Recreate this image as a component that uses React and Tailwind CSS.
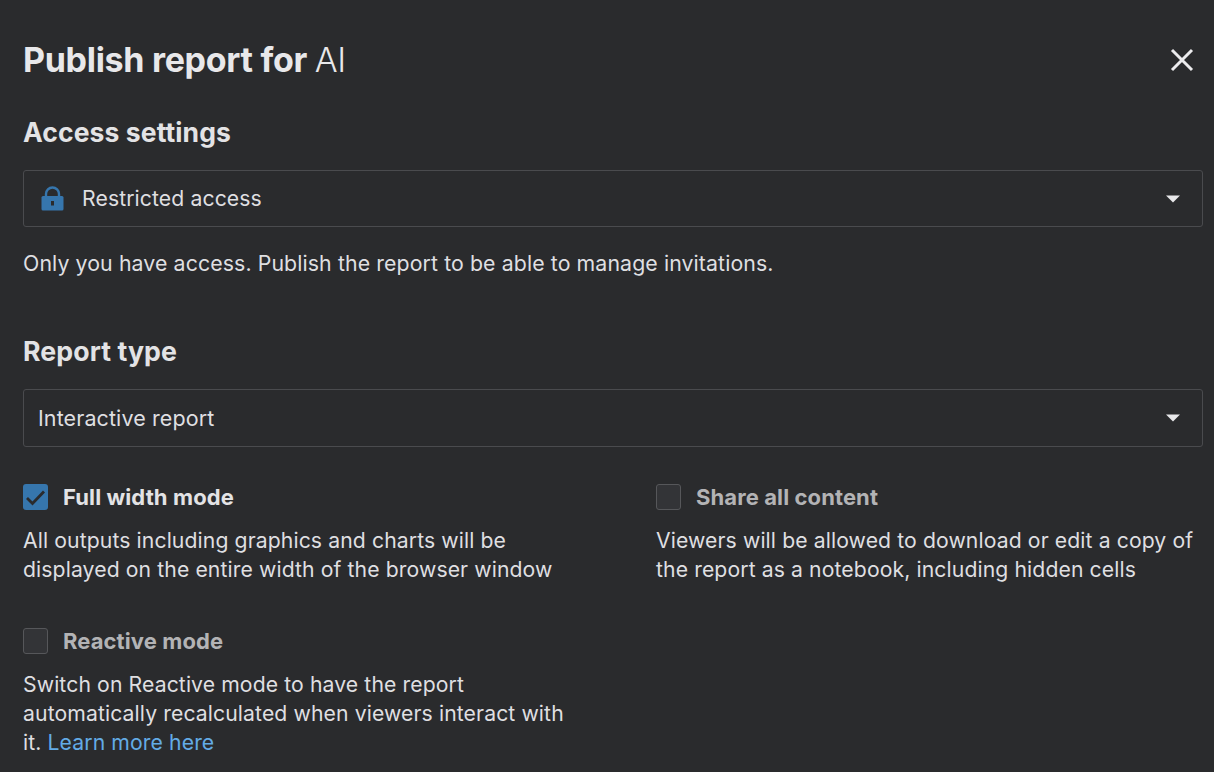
function Caret() {
  return (
    <svg width="16" height="8" viewBox="0 0 16 8" className="shrink-0">
      <path d="M1 0.5 H15 L8 7.5 Z" fill="#e8e8ea" />
    </svg>
  );
}
function Check({ checked, label, dim, children, className = "" }) {
  return (
    <div className={className}>
      <div className="flex items-center gap-[15px] h-[26px]">
        {checked ? (
          <div className="w-[25px] h-[26px] rounded-[3px] bg-[#3676ad] flex items-center justify-center">
            <svg width="21" height="17" viewBox="0 0 21 17" fill="none">
              <path d="M2 9 L7.5 14.5 L19 2.5" stroke="#2a2b2d" strokeWidth="2.8" />
            </svg>
          </div>
        ) : (
          <div className="w-[25px] h-[26px] rounded-[3px] bg-[#333437] border border-[#56575a]" />
        )}
        <span className={`text-[22px] leading-[26px] font-bold ${dim ? "text-[#b3b3b5]" : "text-[#e3e3e5]"}`}>{label}</span>
      </div>
      <p className="mt-[16px] text-[21.2px] leading-[29px] text-[#dfdfe1] whitespace-nowrap">{children}</p>
    </div>
  );
}
export default function App() {
  return (
    <div className="w-[1214px] h-[772px] overflow-hidden bg-[#2a2b2d] font-['Inter',sans-serif] pl-[23px] pr-[11px] tracking-[0.1px]">
      <div className="flex items-center justify-between h-[39px] mt-[40px] pr-[9px]">
        <h1 className="text-[34px] font-bold text-[#e8e8ea] tracking-[-0.3px] whitespace-nowrap">
          Publish report for <span className="font-light">AI</span>
        </h1>
        <svg width="24" height="24" viewBox="0 0 24 24" fill="none">
          <path d="M2 2 L22 22 M22 2 L2 22" stroke="#ececee" strokeWidth="3" />
        </svg>
      </div>
      <h2 className="mt-[38px] text-[26.5px] leading-[31px] font-bold text-[#e3e3e5]">Access settings</h2>
      <div className="mt-[22px] h-[57px] border border-[#4a4b4e] rounded-[3px] flex items-center pl-[17px] pr-[21px]">
        <svg width="23" height="25" viewBox="0 0 23 25" className="shrink-0">
          <path d="M5 11 V8 a6.5 6.5 0 0 1 13 0 V11" fill="none" stroke="#3676ad" strokeWidth="2.4" />
          <rect x="0.5" y="10" width="22" height="14.5" rx="1.5" fill="#3676ad" />
          <rect x="10" y="15" width="3" height="4.5" fill="#2a2b2d" />
        </svg>
        <span className="ml-[18px] text-[21.2px] text-[#dfdfe1] flex-1">Restricted access</span>
        <Caret />
      </div>
      <p className="mt-[22px] text-[21.3px] leading-[29px] text-[#dfdfe1]">Only you have access. Publish the report to be able to manage invitations.</p>
      <h2 className="mt-[58px] text-[26.7px] leading-[31px] font-bold text-[#e3e3e5]">Report type</h2>
      <div className="mt-[22px] h-[58px] border border-[#4a4b4e] rounded-[3px] flex items-center pl-[14px] pr-[21px]">
        <span className="text-[21.5px] text-[#dfdfe1] flex-1">Interactive report</span>
        <Caret />
      </div>
      <div className="mt-[37px] grid grid-cols-[633px_1fr]">
        <Check checked label="Full width mode">
          All outputs including graphics and charts will be<br />displayed on the entire width of the browser window
        </Check>
        <Check dim label="Share all content">
          Viewers will be allowed to download or edit a copy of<br />the report as a notebook, including hidden cells
        </Check>
        <Check dim label="Reactive mode" className="mt-[44px]">
          Switch on Reactive mode to have the report<br />automatically recalculated when viewers interact with<br />it. <span className="text-[#63abe6]">Learn more here</span>
        </Check>
      </div>
    </div>
  );
}
